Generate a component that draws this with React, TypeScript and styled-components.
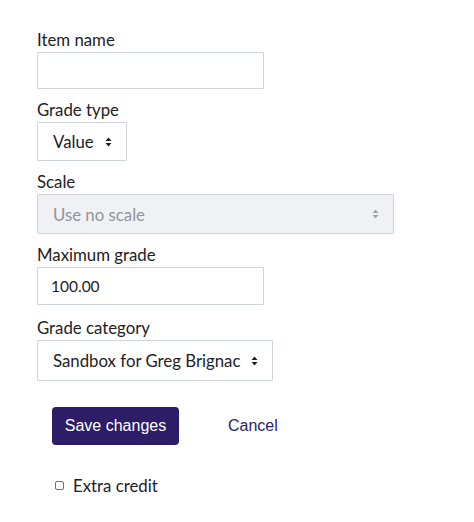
import React from 'react'
import styled, { createGlobalStyle } from 'styled-components'

const GlobalStyle = createGlobalStyle`
  html, body {
    margin: 0;
    padding: 0;
    background: #ffffff;
  }
  * { box-sizing: border-box; }
`

const Form = styled.div`
  padding: 28px 0 0 37px;
  font-family: 'Lato', 'Noto Sans', sans-serif;
  color: #1d2125;
  font-size: 16.8px;
`

const Group = styled.div<{ $mb?: number }>`
  margin-bottom: ${p => p.$mb ?? 9}px;
`

const Label = styled.div`
  line-height: 24px;
  font-size: 16.8px;
`

const TextInput = styled.div<{ $w: number; $h: number }>`
  width: ${p => p.$w}px;
  height: ${p => p.$h}px;
  border: 1px solid #ced4da;
  border-radius: 1px;
  background: #fff;
  display: flex;
  align-items: center;
  padding: 0 13px;
  font-size: 15.5px;
`

const Select = styled.div<{ $w: number; $h: number; $disabled?: boolean }>`
  width: ${p => p.$w}px;
  height: ${p => p.$h}px;
  border: 1px solid #ced4da;
  border-radius: 1px;
  background: ${p => (p.$disabled ? '#eff1f4' : '#fff')};
  color: ${p => (p.$disabled ? '#8f959e' : '#1d2125')};
  display: flex;
  align-items: center;
  justify-content: space-between;
  padding: 0 14px 0 15px;
  font-size: 16.8px;
`

const Arrows = ({ color }: { color: string }) => (
  <svg width="7" height="10" viewBox="0 0 7 10">
    <path d="M0.5 4 L3.5 0.5 L6.5 4 Z" fill={color} />
    <path d="M0.5 6 L3.5 9.5 L6.5 6 Z" fill={color} />
  </svg>
)

const Actions = styled.div`
  display: flex;
  align-items: center;
  margin: 26px 0 0 15px;
`

const SaveButton = styled.button`
  width: 127px;
  height: 38px;
  background: #2d1d67;
  color: #fff;
  border: none;
  border-radius: 4px;
  font-family: 'Liberation Sans', Arial, sans-serif;
  font-size: 16px;
  padding: 0;
`

const CancelLink = styled.a`
  margin-left: 49px;
  color: #2d1d67;
  font-family: 'Liberation Sans', Arial, sans-serif;
  font-size: 16px;
`

const CheckRow = styled.label`
  display: flex;
  align-items: center;
  margin: 30px 0 0 18px;
  font-size: 16.8px;
`

const Box = styled.span`
  width: 9px;
  height: 9px;
  border: 1px solid #6e6e6e;
  border-radius: 2px;
  margin-right: 9px;
  background: #fff;
`

const App = () => {
  return (
    <>
      <GlobalStyle />
      <Form>
        <Group>
          <Label>Item name</Label>
          <TextInput $w={227} $h={37} />
        </Group>
        <Group>
          <Label>Grade type</Label>
          <Select $w={90} $h={39}>
            Value <Arrows color="#1d2125" />
          </Select>
        </Group>
        <Group>
          <Label>Scale</Label>
          <Select $w={357} $h={40} $disabled>
            Use no scale <Arrows color="#9ea3aa" />
          </Select>
        </Group>
        <Group $mb={11}>
          <Label>Maximum grade</Label>
          <TextInput $w={227} $h={38}>100.00</TextInput>
        </Group>
        <Group>
          <Label>Grade category</Label>
          <Select $w={236} $h={41}>
            Sandbox for Greg Brignac <Arrows color="#1d2125" />
          </Select>
        </Group>
        <Actions>
          <SaveButton>Save changes</SaveButton>
          <CancelLink>Cancel</CancelLink>
        </Actions>
        <CheckRow>
          <Box />
          Extra credit
        </CheckRow>
      </Form>
    </>
  )
}

export default App
